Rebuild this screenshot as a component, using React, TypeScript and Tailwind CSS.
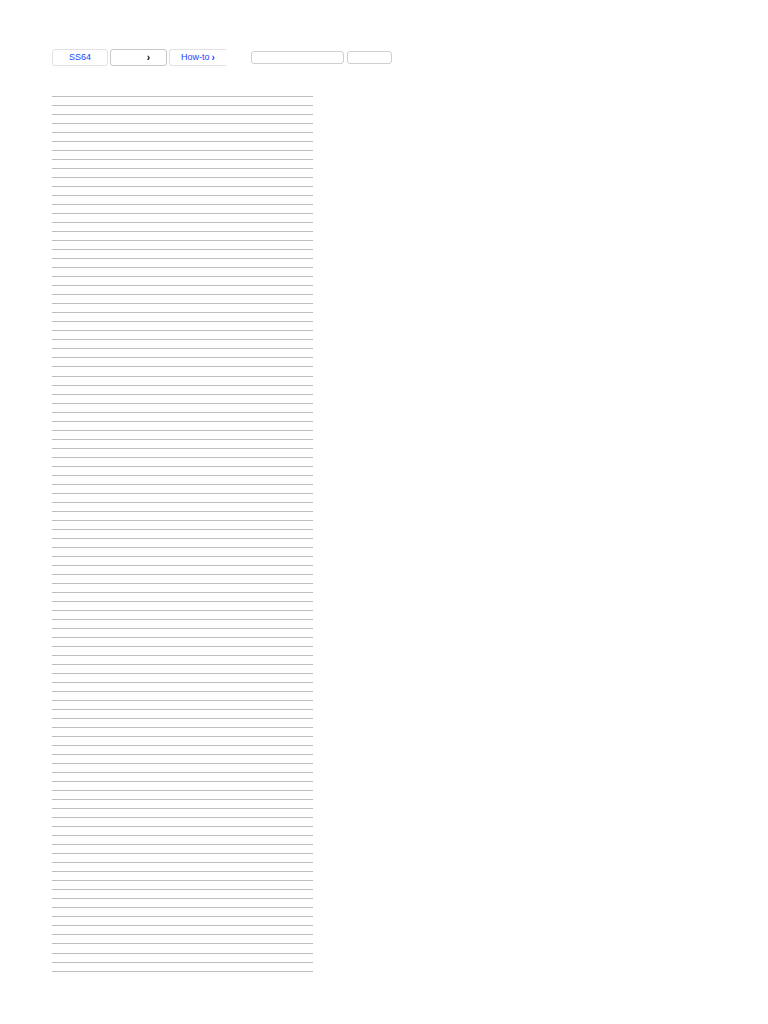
const rows = Array.from({ length: 98 }, (_, i) => i);

export default function App() {
  return (
    <div className="min-h-[1024px] bg-white font-['Liberation_Sans',Arial,sans-serif]">
      <div className="pl-[52px] pt-[49px]">
        {/* nav bar */}
        <div className="flex items-start">
          <a className="flex h-[17px] w-[56px] items-center justify-center rounded-[3px] border border-[#e2e2e2] text-[9px] text-[#2244ff]">
            SS64
          </a>
          <a className="ml-[2px] flex h-[17px] w-[57px] items-center justify-center rounded-[3px] border border-[#c8c8c8] pl-[20px] text-[10px] font-bold text-black">
            ›
          </a>
          <a className="ml-[2px] flex h-[17px] w-[57px] items-center justify-center rounded-l-[3px] border border-r-0 border-[#e2e2e2] text-[9px] text-[#2244ff]">
            How-to <span className="ml-[2px] text-[10px] font-bold">›</span>
          </a>
          <div className="ml-[25px] mt-[2px] h-[13px] w-[93px] rounded-[3px] border border-[#cfcfcf]" />
          <div className="ml-[3px] mt-[2px] h-[13px] w-[45px] rounded-[3px] border border-[#cfcfcf]" />
        </div>

        {/* lined list */}
        <div className="mt-[22px] flex w-[261px] flex-col">
          {rows.map((r) => (
            <div key={r} className="h-[9.02px] border-b border-[#bdbdbd]" />
          ))}
        </div>
      </div>
    </div>
  );
}
